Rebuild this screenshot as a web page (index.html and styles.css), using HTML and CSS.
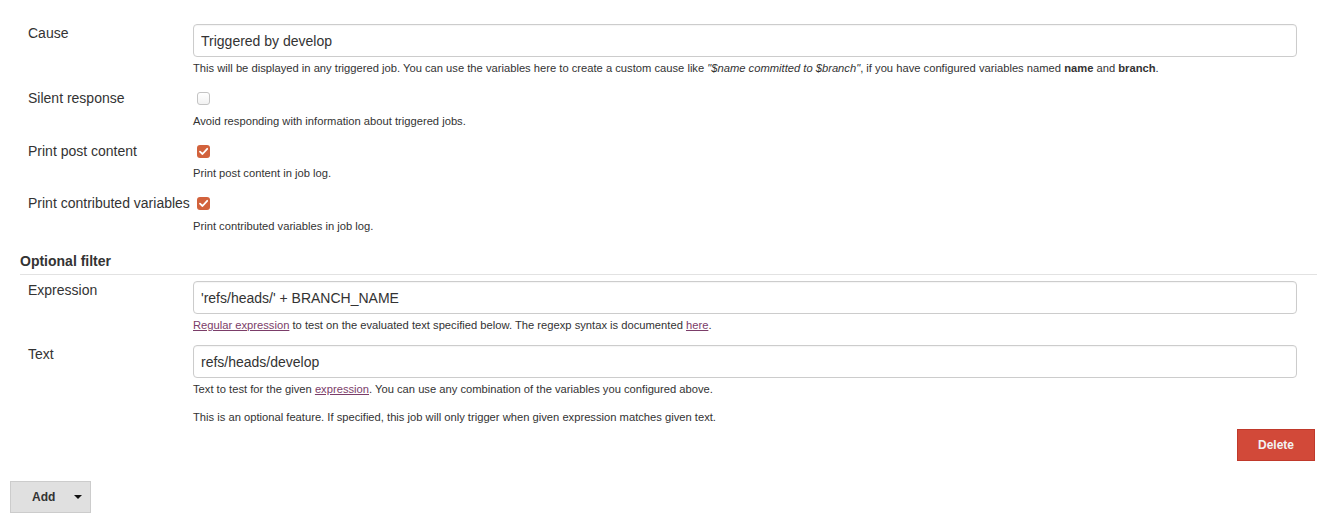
FILE: index.html
```html
<!DOCTYPE html>
<html lang="en">

<head>
    <meta charset="UTF-8">
    <title>Generic Webhook Trigger</title>
    <link rel="stylesheet" href="styles.css">
</head>

<body>
    <div class="config">
        <div class="row row-cause">
            <div class="label">Cause</div>
            <div class="field">
                <input class="text-input" type="text" value="Triggered by develop">
                <div class="help">This will be displayed in any triggered job. You can use the variables here to create a custom cause like <i>"$name committed to $branch"</i>, if you have configured variables named <b>name</b> and <b>branch</b>.</div>
            </div>
        </div>

        <div class="row row-check">
            <div class="label">Silent response</div>
            <div class="field">
                <span class="checkbox"></span>
                <div class="help help-check">Avoid responding with information about triggered jobs.</div>
            </div>
        </div>

        <div class="row row-check">
            <div class="label">Print post content</div>
            <div class="field">
                <span class="checkbox checked">
                    <svg viewBox="0 0 13 13" width="13" height="13"><path d="M3 6.6 L5.5 9 L10.2 3.8" fill="none" stroke="#fff" stroke-width="1.8" stroke-linecap="round" stroke-linejoin="round"/></svg>
                </span>
                <div class="help help-check">Print post content in job log.</div>
            </div>
        </div>

        <div class="row row-check">
            <div class="label">Print contributed variables</div>
            <div class="field">
                <span class="checkbox checked">
                    <svg viewBox="0 0 13 13" width="13" height="13"><path d="M3 6.6 L5.5 9 L10.2 3.8" fill="none" stroke="#fff" stroke-width="1.8" stroke-linecap="round" stroke-linejoin="round"/></svg>
                </span>
                <div class="help help-check">Print contributed variables in job log.</div>
            </div>
        </div>

        <div class="section-header">Optional filter</div>

        <div class="row row-expression">
            <div class="label">Expression</div>
            <div class="field">
                <input class="text-input" type="text" value="'refs/heads/' + BRANCH_NAME">
                <div class="help"><a href="#">Regular expression</a> to test on the evaluated text specified below. The regexp syntax is documented <a href="#">here</a>.</div>
            </div>
        </div>

        <div class="row row-text">
            <div class="label">Text</div>
            <div class="field">
                <input class="text-input" type="text" value="refs/heads/develop">
                <div class="help">Text to test for the given <a href="#">expression</a>. You can use any combination of the variables you configured above.</div>
                <div class="help help-note">This is an optional feature. If specified, this job will only trigger when given expression matches given text.</div>
            </div>
        </div>

        <div class="actions">
            <button class="btn-delete">Delete</button>
        </div>
    </div>

    <div class="add-bar">
        <button class="btn-add">Add <span class="caret"></span></button>
    </div>
</body>

</html>
```

FILE: styles.css
```css
body {
    margin: 0;
    background-color: #fff;
    color: #333;
    font-family: "Liberation Sans", Arial, sans-serif;
    font-size: 14px;
}

.config {
    padding: 24px 10px 0 20px;
}

.row {
    display: grid;
    grid-template-columns: 165px 1fr;
    padding: 0 20px 0 8px;
}

.label {
    line-height: 16px;
    padding-top: 1px;
}

.text-input {
    display: block;
    box-sizing: border-box;
    width: 100%;
    height: 33px;
    margin: 0;
    padding: 0 7px;
    border: 1px solid #ccc;
    border-radius: 4px;
    font-family: "Liberation Sans", Arial, sans-serif;
    font-size: 14px;
    color: #333;
    box-shadow: inset 0 1px 1px rgba(0, 0, 0, 0.04);
}

.help {
    font-size: 11.2px;
    line-height: 14px;
    margin-top: 4px;
}

.help a {
    color: #7b3d69;
    text-decoration: underline;
}

.row-check {
    margin-top: 15px;
}

.row-check .label {
    padding-top: 0;
}

.checkbox {
    display: block;
    box-sizing: border-box;
    width: 13px;
    height: 13px;
    margin: 2px 0 1px 4px;
    border: 1px solid #c4c4c4;
    border-radius: 3px;
    background: linear-gradient(#fff, #f2f2f2);
}

.checkbox.checked {
    border: none;
    background: #d2623c;
}

.checkbox svg {
    display: block;
}

.help-check {
    margin-top: 8.5px;
}

.section-header {
    margin-top: 20px;
    padding-bottom: 5px;
    font-weight: bold;
    line-height: 16px;
    border-bottom: 1px solid #e2e2e2;
}

.row-expression {
    margin-top: 6.5px;
}

.row-text {
    margin-top: 13px;
}

.help-note {
    margin-top: 14px;
}

.actions {
    display: flex;
    justify-content: flex-end;
    padding-right: 2px;
    margin-top: 5px;
}

.btn-delete {
    width: 78px;
    height: 32px;
    background-color: #d24939;
    border: 1px solid #c0392b;
    color: #f3f3f3;
    font-family: "Liberation Sans", Arial, sans-serif;
    font-size: 12px;
    font-weight: bold;
    cursor: pointer;
}

.add-bar {
    padding: 20px 10px 0;
}

.btn-add {
    display: flex;
    align-items: center;
    box-sizing: border-box;
    width: 81px;
    height: 32px;
    padding: 0 0 0 21px;
    background-color: #e0e0e0;
    border: 1px solid #ccc;
    color: #333;
    font-family: "Liberation Sans", Arial, sans-serif;
    font-size: 12px;
    font-weight: bold;
    cursor: pointer;
}

.caret {
    width: 0;
    height: 0;
    margin-left: 19px;
    border-left: 4px solid transparent;
    border-right: 4px solid transparent;
    border-top: 4px solid #111;
}
```
